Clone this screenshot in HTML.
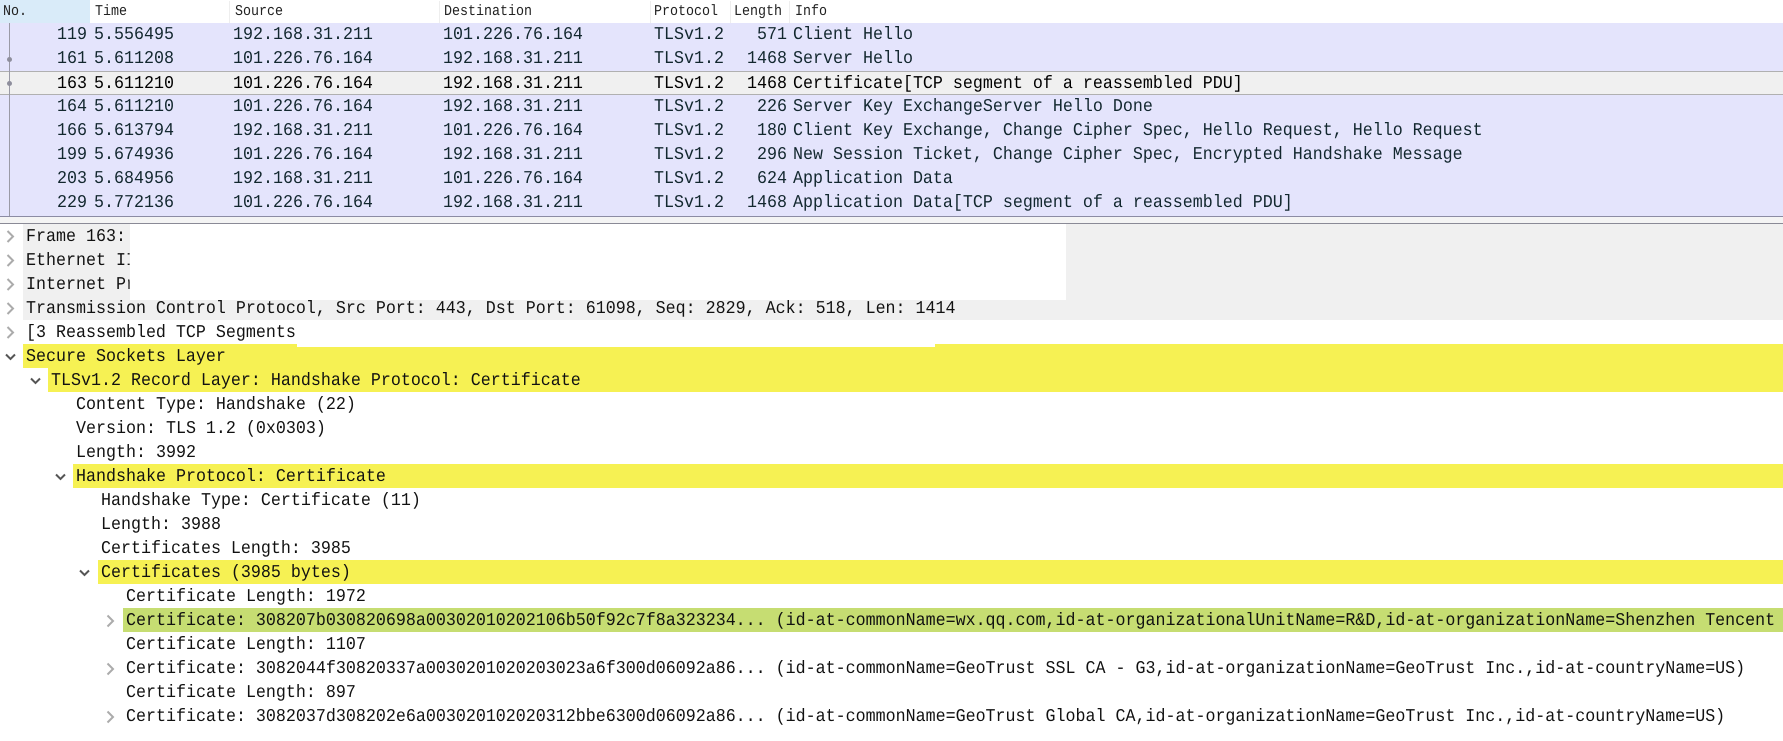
<!DOCTYPE html>
<html><head><meta charset="utf-8">
<style>
html,body{margin:0;padding:0;background:#fff;}
#p{position:relative;width:1783px;height:741px;overflow:hidden;background:#fff;font-family:"Liberation Mono",monospace;font-size:18px;color:#111;text-rendering:geometricPrecision;}
.b{position:absolute;}
.t{position:absolute;white-space:pre;line-height:24px;height:24px;transform:scaleX(.9253);transform-origin:0 0;}
.h{position:absolute;top:0;white-space:pre;line-height:23px;font-size:15px;color:#222;transform:scaleX(.8889);transform-origin:0 0;}
.s{position:absolute;top:1px;width:1px;height:22px;background:#eee;}
.r .t{color:#12272e;}
.n{text-align:right;transform-origin:100% 0 !important;}
svg{position:absolute;overflow:visible;}
</style></head><body><div id="p">

<div class="b" style="left:0;top:0;width:90px;height:23px;background:#d9ebf9;"></div>
<div class="s" style="left:229px"></div><div class="s" style="left:439px"></div><div class="s" style="left:650px"></div><div class="s" style="left:730px"></div><div class="s" style="left:789px"></div>
<div class="h" style="left:3px">No.</div>
<div class="h" style="left:95px">Time</div>
<div class="h" style="left:235px">Source</div>
<div class="h" style="left:444px">Destination</div>
<div class="h" style="left:654px">Protocol</div>
<div class="h" style="left:734px">Length</div>
<div class="h" style="left:795px">Info</div>

<div class="b" style="left:0;top:23px;width:1783px;height:193px;background:#e4e4fc;"></div>
<div class="b" style="left:0;top:71px;width:1783px;height:24px;background:#f0f0f0;border-top:1px solid #b0b0b0;border-bottom:1px solid #b0b0b0;box-sizing:border-box;"></div>
<div class="b" style="left:9px;top:23px;width:1px;height:193px;background:#9a9aa6;"></div>
<div class="b" style="left:7px;top:57px;width:5px;height:5px;border-radius:50%;background:#8e8e9c;"></div>
<div class="b" style="left:7px;top:81px;width:5px;height:5px;border-radius:50%;background:#8e8e9c;"></div>

<div class="r">
<div class="t n" style="left:20px;width:67px;top:23px">119</div><div class="t" style="left:94px;top:23px">5.556495</div><div class="t" style="left:233px;top:23px">192.168.31.211</div><div class="t" style="left:443px;top:23px">101.226.76.164</div><div class="t" style="left:654px;top:23px">TLSv1.2</div><div class="t n" style="left:720px;width:67px;top:23px">571</div><div class="t" style="left:793px;top:23px">Client Hello</div>
<div class="t n" style="left:20px;width:67px;top:47px">161</div><div class="t" style="left:94px;top:47px">5.611208</div><div class="t" style="left:233px;top:47px">101.226.76.164</div><div class="t" style="left:443px;top:47px">192.168.31.211</div><div class="t" style="left:654px;top:47px">TLSv1.2</div><div class="t n" style="left:720px;width:67px;top:47px">1468</div><div class="t" style="left:793px;top:47px">Server Hello</div>
<div class="t n" style="left:20px;width:67px;top:72px;color:#000">163</div><div class="t" style="left:94px;top:72px;color:#000">5.611210</div><div class="t" style="left:233px;top:72px;color:#000">101.226.76.164</div><div class="t" style="left:443px;top:72px;color:#000">192.168.31.211</div><div class="t" style="left:654px;top:72px;color:#000">TLSv1.2</div><div class="t n" style="left:720px;width:67px;top:72px;color:#000">1468</div><div class="t" style="left:793px;top:72px;color:#000">Certificate[TCP segment of a reassembled PDU]</div>
<div class="t n" style="left:20px;width:67px;top:95px">164</div><div class="t" style="left:94px;top:95px">5.611210</div><div class="t" style="left:233px;top:95px">101.226.76.164</div><div class="t" style="left:443px;top:95px">192.168.31.211</div><div class="t" style="left:654px;top:95px">TLSv1.2</div><div class="t n" style="left:720px;width:67px;top:95px">226</div><div class="t" style="left:793px;top:95px">Server Key ExchangeServer Hello Done</div>
<div class="t n" style="left:20px;width:67px;top:119px">166</div><div class="t" style="left:94px;top:119px">5.613794</div><div class="t" style="left:233px;top:119px">192.168.31.211</div><div class="t" style="left:443px;top:119px">101.226.76.164</div><div class="t" style="left:654px;top:119px">TLSv1.2</div><div class="t n" style="left:720px;width:67px;top:119px">180</div><div class="t" style="left:793px;top:119px">Client Key Exchange, Change Cipher Spec, Hello Request, Hello Request</div>
<div class="t n" style="left:20px;width:67px;top:143px">199</div><div class="t" style="left:94px;top:143px">5.674936</div><div class="t" style="left:233px;top:143px">101.226.76.164</div><div class="t" style="left:443px;top:143px">192.168.31.211</div><div class="t" style="left:654px;top:143px">TLSv1.2</div><div class="t n" style="left:720px;width:67px;top:143px">296</div><div class="t" style="left:793px;top:143px">New Session Ticket, Change Cipher Spec, Encrypted Handshake Message</div>
<div class="t n" style="left:20px;width:67px;top:167px">203</div><div class="t" style="left:94px;top:167px">5.684956</div><div class="t" style="left:233px;top:167px">192.168.31.211</div><div class="t" style="left:443px;top:167px">101.226.76.164</div><div class="t" style="left:654px;top:167px">TLSv1.2</div><div class="t n" style="left:720px;width:67px;top:167px">624</div><div class="t" style="left:793px;top:167px">Application Data</div>
<div class="t n" style="left:20px;width:67px;top:191px">229</div><div class="t" style="left:94px;top:191px">5.772136</div><div class="t" style="left:233px;top:191px">101.226.76.164</div><div class="t" style="left:443px;top:191px">192.168.31.211</div><div class="t" style="left:654px;top:191px">TLSv1.2</div><div class="t n" style="left:720px;width:67px;top:191px">1468</div><div class="t" style="left:793px;top:191px">Application Data[TCP segment of a reassembled PDU]</div>
</div>

<div class="b" style="left:0;top:216px;width:1783px;height:1px;background:#8c8ca4;"></div>
<div class="b" style="left:0;top:217px;width:1783px;height:6px;background:#f4f4f4;"></div>
<div class="b" style="left:0;top:223px;width:1783px;height:1px;background:#8a8a96;"></div>

<div class="b" style="left:23px;top:224px;width:1760px;height:96px;background:#f0f0f0;"></div>
<div class="b" style="left:130px;top:224px;width:936px;height:76px;background:#fff;"></div>
<div class="b" style="left:23px;top:344px;width:1760px;height:24px;background:#f6f153;"></div>
<div class="b" style="left:297px;top:344px;width:638px;height:3px;background:#fff;"></div>
<div class="b" style="left:48px;top:368px;width:1735px;height:24px;background:#f6f153;"></div>
<div class="b" style="left:73px;top:464px;width:1710px;height:24px;background:#f6f153;"></div>
<div class="b" style="left:98px;top:560px;width:1685px;height:24px;background:#f6f153;"></div>
<div class="b" style="left:123px;top:608px;width:1660px;height:24px;background:#c6dd72;"></div>

<svg width="1783" height="741" style="left:0;top:0" fill="none" stroke-width="2">
<g stroke="#ababab">
<path d="M7.500 231l5.500 5.500-5.500 5.500M7.500 255l5.500 5.500-5.500 5.500M7.500 279l5.500 5.500-5.500 5.500M7.500 303l5.500 5.500-5.500 5.500M7.500 327l5.500 5.500-5.500 5.500"/>
<path d="M107.500 615.500l5.500 5.500-5.500 5.500M107.500 663.500l5.500 5.500-5.500 5.500M107.500 711.500l5.500 5.500-5.500 5.500"/>
</g>
<g stroke="#555">
<path d="M6 354.500l4.500 4.500 4.500-4.500M31 378.500l4.500 4.500 4.500-4.500M56 474.500l4.500 4.500 4.500-4.500M80 570.500l4.500 4.500 4.500-4.500"/>
</g>
</svg>

<div class="t" style="left:26px;top:225px;width:112px;overflow:hidden">Frame 163: </div>
<div class="t" style="left:26px;top:249px;width:112px;overflow:hidden">Ethernet II</div>
<div class="t" style="left:26px;top:273px;width:112px;overflow:hidden">Internet Pr</div>
<div class="t" style="left:26px;top:297px">Transmission Control Protocol, Src Port: 443, Dst Port: 61098, Seq: 2829, Ack: 518, Len: 1414</div>
<div class="t" style="left:26px;top:321px">[3 Reassembled TCP Segments</div>
<div class="t" style="left:26px;top:345px">Secure Sockets Layer</div>
<div class="t" style="left:51px;top:369px">TLSv1.2 Record Layer: Handshake Protocol: Certificate</div>
<div class="t" style="left:76px;top:393px">Content Type: Handshake (22)</div>
<div class="t" style="left:76px;top:417px">Version: TLS 1.2 (0x0303)</div>
<div class="t" style="left:76px;top:441px">Length: 3992</div>
<div class="t" style="left:76px;top:465px">Handshake Protocol: Certificate</div>
<div class="t" style="left:101px;top:489px">Handshake Type: Certificate (11)</div>
<div class="t" style="left:101px;top:513px">Length: 3988</div>
<div class="t" style="left:101px;top:537px">Certificates Length: 3985</div>
<div class="t" style="left:101px;top:561px">Certificates (3985 bytes)</div>
<div class="t" style="left:126px;top:585px">Certificate Length: 1972</div>
<div class="t" style="left:126px;top:609px">Certificate: 308207b030820698a00302010202106b50f92c7f8a323234... (id-at-commonName=wx.qq.com,id-at-organizationalUnitName=R&amp;D,id-at-organizationName=Shenzhen Tencent </div>
<div class="t" style="left:126px;top:633px">Certificate Length: 1107</div>
<div class="t" style="left:126px;top:657px">Certificate: 3082044f30820337a0030201020203023a6f300d06092a86... (id-at-commonName=GeoTrust SSL CA - G3,id-at-organizationName=GeoTrust Inc.,id-at-countryName=US)</div>
<div class="t" style="left:126px;top:681px">Certificate Length: 897</div>
<div class="t" style="left:126px;top:705px">Certificate: 3082037d308202e6a003020102020312bbe6300d06092a86... (id-at-commonName=GeoTrust Global CA,id-at-organizationName=GeoTrust Inc.,id-at-countryName=US)</div>

</div></body></html>
